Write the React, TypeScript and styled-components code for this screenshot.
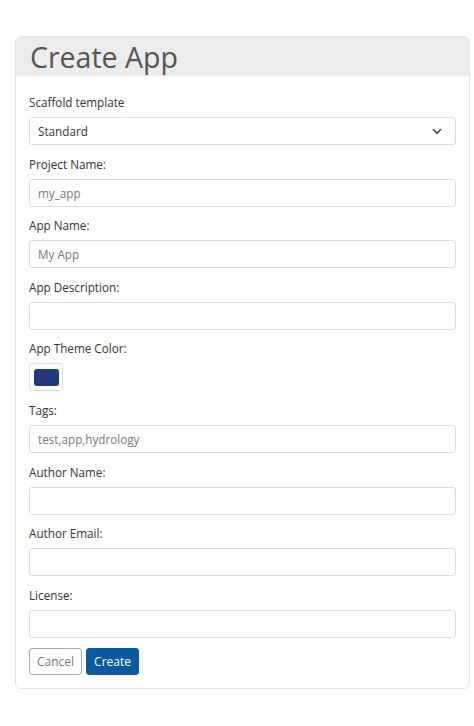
import styled, { createGlobalStyle } from "styled-components";

const GlobalStyle = createGlobalStyle`
  body {
    margin: 0;
    background: #ffffff;
    font-family: "Open Sans", "Liberation Sans", sans-serif;
    color: #333333;
  }
`;

type Field = {
  label: string;
  placeholder?: string;
};

const fields: Field[] = [
  { label: "Project Name:", placeholder: "my_app" },
  { label: "App Name:", placeholder: "My App" },
  { label: "App Description:" },
];

const moreFields: Field[] = [
  { label: "Tags:", placeholder: "test,app,hydrology" },
  { label: "Author Name:" },
  { label: "Author Email:" },
  { label: "License:" },
];

export default function App() {
  return (
    <Page>
      <GlobalStyle />
      <Card>
        <Header>
          <Title>Create App</Title>
        </Header>
        <Body>
          <Group>
            <Label>Scaffold template</Label>
            <SelectBox>
              <span>Standard</span>
              <svg width="12" height="12" viewBox="0 0 16 16">
                <path
                  d="M3 6l5 5 5-5"
                  fill="none"
                  stroke="#343a40"
                  strokeWidth="1.8"
                  strokeLinecap="round"
                  strokeLinejoin="round"
                />
              </svg>
            </SelectBox>
          </Group>
          {fields.map(f => (
            <Group key={f.label}>
              <Label>{f.label}</Label>
              <TextInput type="text" placeholder={f.placeholder} />
            </Group>
          ))}
          <Group>
            <Label>App Theme Color:</Label>
            <ColorWell>
              <Swatch />
            </ColorWell>
          </Group>
          {moreFields.map(f => (
            <Group key={f.label}>
              <Label>{f.label}</Label>
              <TextInput type="text" placeholder={f.placeholder} />
            </Group>
          ))}
          <Actions>
            <Button>Cancel</Button>
            <Button $primary>Create</Button>
          </Actions>
        </Body>
      </Card>
    </Page>
  );
}

const Page = styled.div`
  padding: 36px 4px 0 15px;
`;

const Card = styled.div`
  border: 1px solid #e4e4e4;
  border-radius: 6px;
  overflow: hidden;
  background: #ffffff;
`;

const Header = styled.div`
  background: #ececec;
  height: 39px;
  padding: 2px 14px 0;
  box-sizing: border-box;
  display: flex;
  align-items: center;
`;

const Title = styled.h1`
  margin: 0;
  font-size: 28.5px;
  font-weight: 400;
  color: #555555;
  line-height: 1;
`;

const Body = styled.div`
  padding: 18px 13px 13px 13px;
  display: flex;
  flex-direction: column;
`;

const Group = styled.div`
  display: flex;
  flex-direction: column;
  gap: 6px;
  margin-bottom: 10.6px;
`;

const Label = styled.label`
  font-size: 11.7px;
  line-height: 17px;
  color: #333333;
`;

const TextInput = styled.input`
  box-sizing: border-box;
  width: 100%;
  height: 28px;
  padding: 0 8px;
  font-family: "Open Sans", "Liberation Sans", sans-serif;
  font-size: 11.7px;
  color: #555555;
  border: 1px solid #dcdcdc;
  border-radius: 3px;
  outline: none;
  &::placeholder {
    color: #7a7a7a;
  }
`;

const SelectBox = styled.div`
  box-sizing: border-box;
  height: 28px;
  padding: 0 12px 0 8px;
  display: flex;
  align-items: center;
  justify-content: space-between;
  font-size: 11.7px;
  color: #333333;
  border: 1px solid #dcdcdc;
  border-radius: 3px;
`;

const ColorWell = styled.div`
  box-sizing: border-box;
  width: 34px;
  height: 28px;
  border: 1px solid #dddddd;
  border-radius: 3px;
  display: flex;
  align-items: center;
  justify-content: center;
`;

const Swatch = styled.div`
  width: 25px;
  height: 17px;
  border-radius: 3px;
  background: #243a78;
`;

const Actions = styled.div`
  display: flex;
  gap: 4px;
`;

const Button = styled.button<{ $primary?: boolean }>`
  height: 27px;
  padding: 0 7px;
  font-family: "Open Sans", "Liberation Sans", sans-serif;
  font-size: 12px;
  border-radius: 3px;
  border: 1px solid ${p => (p.$primary ? "#0b5a9f" : "#aaaaaa")};
  background: ${p => (p.$primary ? "#0b5a9f" : "#ffffff")};
  color: ${p => (p.$primary ? "#ffffff" : "#777777")};
`;
